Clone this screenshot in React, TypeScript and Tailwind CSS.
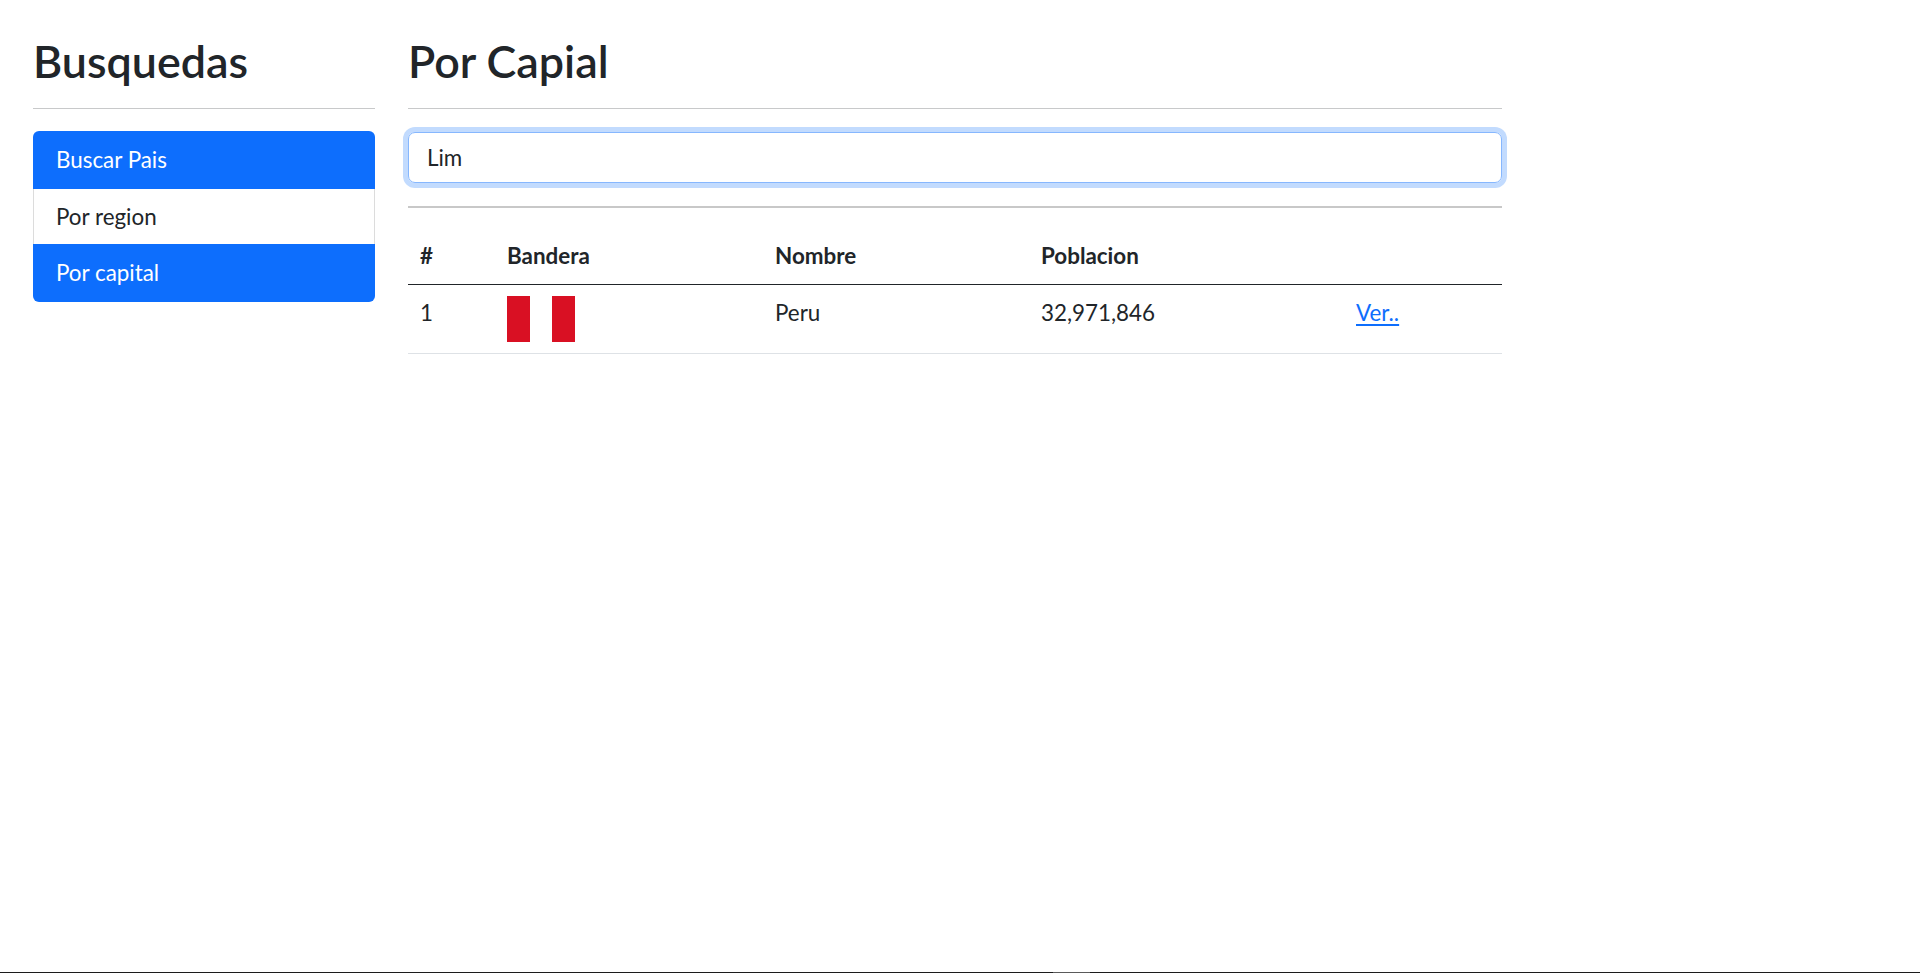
import { useState } from 'react'

const menu = [
  { label: 'Buscar Pais', active: true },
  { label: 'Por region', active: false },
  { label: 'Por capital', active: true },
]

const countries = [{ name: 'Peru', population: 32971846 }]

function PeruFlag() {
  return (
    <div className="flex h-[46px] w-[68px]">
      <div className="flex-1 bg-[#d91023]" />
      <div className="flex-1 bg-white" />
      <div className="flex-1 bg-[#d91023]" />
    </div>
  )
}

export default function App() {
  const [term, setTerm] = useState('Lim')

  return (
    <div className="flex h-[973px] flex-col bg-white font-['Lato','Liberation_Sans',sans-serif] text-[22.4px] leading-[34px] text-[#212529]">
      <div className="flex flex-1 gap-[33px] pl-[33px] pt-[34px]">
        {/* sidebar */}
        <aside className="w-[342px] shrink-0">
          <h2 className="text-[44.8px] leading-[54px] font-semibold">Busquedas</h2>
          <hr className="mt-[20px] mb-[22px] border-t border-[#c8c9ca]" />
          <ul className="flex flex-col">
            {menu.map((item, i) => (
              <li
                key={item.label}
                className={
                  item.active
                    ? 'h-[58px] bg-[#0d6efd] px-[23px] pt-[12px] text-white ' +
                      (i === 0 ? 'rounded-t-[6px]' : 'rounded-b-[6px]')
                    : 'h-[55px] border-x border-[#dcdcdc] bg-white px-[22px] pt-[11px]'
                }
              >
                {item.label}
              </li>
            ))}
          </ul>
        </aside>

        {/* main */}
        <main className="w-[1094px] shrink-0">
          <h2 className="text-[44.8px] leading-[54px] font-semibold">Por Capial</h2>
          <hr className="mt-[20px] mb-[23px] border-t border-[#c8c9ca]" />
          <input
            value={term}
            onChange={(e) => setTerm(e.target.value)}
            className="block h-[51px] w-full rounded-[7px] border border-[#86b7fe] px-[18px] text-[22.4px] text-[#212529] shadow-[0_0_0_5px_rgba(13,110,253,0.25)] outline-none"
          />
          <hr className="mt-[23px] mb-[20px] border-t-2 border-[#c8c8c8]" />

          <table className="w-full table-fixed border-collapse text-left">
            <colgroup>
              <col className="w-[88px]" />
              <col className="w-[268px]" />
              <col className="w-[266px]" />
              <col className="w-[315px]" />
              <col className="w-[157px]" />
            </colgroup>
            <thead>
              <tr>
                <th className="border-b border-[#212529] px-[12px] py-[11px] align-top font-bold">#</th>
                <th className="border-b border-[#212529] px-[11px] py-[11px] align-top font-bold">Bandera</th>
                <th className="border-b border-[#212529] px-[11px] py-[11px] align-top font-bold">Nombre</th>
                <th className="border-b border-[#212529] px-[11px] py-[11px] align-top font-bold">Poblacion</th>
                <th className="border-b border-[#212529] px-[11px] py-[11px]" />
              </tr>
            </thead>
            <tbody>
              {countries.map((c, i) => (
                <tr key={c.name} className="border-b border-[#dee2e6]">
                  <td className="px-[12px] py-[11px] align-top">{i + 1}</td>
                  <td className="px-[11px] py-[11px] align-top">
                    <PeruFlag />
                  </td>
                  <td className="px-[11px] py-[11px] align-top">{c.name}</td>
                  <td className="px-[11px] py-[11px] align-top">
                    {c.population.toLocaleString('en-US')}
                  </td>
                  <td className="px-[11px] py-[11px] align-top">
                    <a href="#" className="text-[#0d6efd] underline underline-offset-[3px]">
                      Ver..
                    </a>
                  </td>
                </tr>
              ))}
            </tbody>
          </table>
        </main>
      </div>

      {/* bottom edge of the window */}
      <div className="flex h-px">
        <div className="w-[1053px] bg-[#1c1c1c]" />
        <div className="w-[37px] bg-[#5a5a5a]" />
        <div className="flex-1 bg-[#1c1c1c]" />
      </div>
    </div>
  )
}
